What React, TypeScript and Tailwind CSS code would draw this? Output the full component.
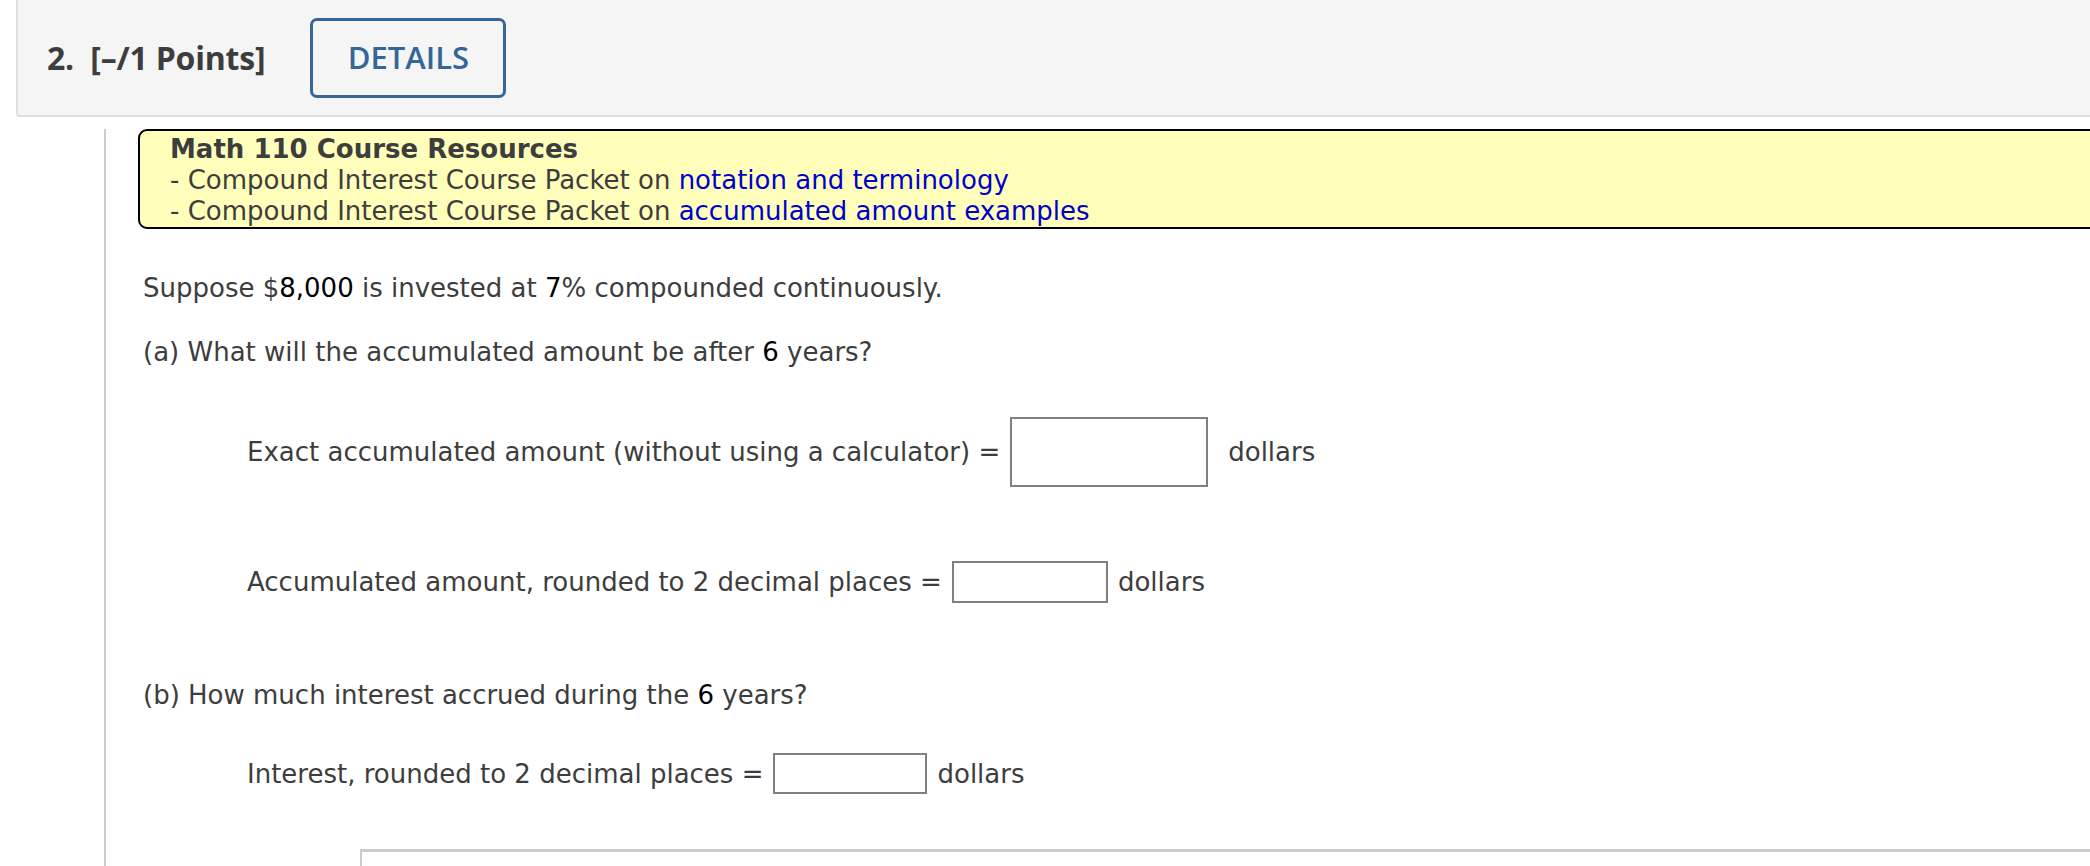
import React from 'react';

const body = { fontFamily: '"DejaVu Sans", Verdana, sans-serif' };
const head = { fontFamily: '"Open Sans", "Noto Sans", sans-serif' };

function Blank({ w, h }: { w: string; h: string }) {
  return <input type="text" className={`${w} ${h} border-2 border-[#808080] bg-white`} />;
}

export default function App() {
  return (
    <div className="h-[866px] w-[2090px] overflow-hidden bg-white text-[#3d3d3d]" style={body}>
      {/* question header */}
      <header
        className="ml-[16px] flex h-[117px] w-[2200px] items-center rounded-bl-[4px] border-b-2 border-l-2 border-[#dedede] bg-[#f5f5f5] pl-[29px]"
        style={head}
      >
        <span className="text-[32px] font-bold tracking-[-0.2px] text-[#3d3d3d]">2.&nbsp; [–/1 Points]</span>
        <button className="ml-[45px] flex h-[80px] w-[196px] items-center justify-center rounded-[7px] border-[3px] border-[#336699] text-[31px] font-semibold text-[#336699]">
          DETAILS
        </button>
      </header>

      <div className="ml-[104px] h-[760px] border-l-2 border-[#cccccc]">
        {/* resources box */}
        <div className="mt-[12px] ml-[32px] h-[100px] w-[2100px] rounded-l-[9px] border-2 border-black bg-[#ffffbb] pt-[3px] pl-[30px] text-[26px] leading-[31px]">
          <div className="font-bold">Math 110 Course Resources</div>
          <div>
            - Compound Interest Course Packet on <a className="text-[#0000cc]">notation and terminology</a>
          </div>
          <div>
            - Compound Interest Course Packet on <a className="text-[#0000cc]">accumulated amount examples</a>
          </div>
        </div>

        <div className="ml-[37px] text-[26px] leading-[32px]">
          <p className="mt-[43px]">
            Suppose $<span className="text-black">8,000</span> is invested at <span className="text-black">7</span>% compounded continuously.
          </p>
          <p className="mt-[32px]">
            (a) What will the accumulated amount be after <span className="text-black">6</span> years?
          </p>

          <div className="mt-[49px] flex items-center pl-[104px]">
            <span>Exact accumulated amount (without using a calculator) =</span>
            <span className="ml-[10px]"><Blank w="w-[198px]" h="h-[70px]" /></span>
            <span className="ml-[20px]">dollars</span>
          </div>

          <div className="mt-[74px] flex items-center pl-[104px]">
            <span>Accumulated amount, rounded to 2 decimal places =</span>
            <span className="ml-[10px]"><Blank w="w-[156px]" h="h-[42px]" /></span>
            <span className="ml-[10px]">dollars</span>
          </div>

          <p className="mt-[76px]">
            (b) How much interest accrued during the <span className="text-black">6</span> years?
          </p>

          <div className="mt-[42px] flex items-center pl-[104px]">
            <span>Interest, rounded to 2 decimal places =</span>
            <span className="ml-[10px]"><Blank w="w-[154px]" h="h-[41px]" /></span>
            <span className="ml-[10px]">dollars</span>
          </div>

          <div className="mt-[55px] ml-[217px] h-[40px] w-[1800px] border-t-[3px] border-l-2 border-[#cccccc]" />
        </div>
      </div>
    </div>
  );
}
